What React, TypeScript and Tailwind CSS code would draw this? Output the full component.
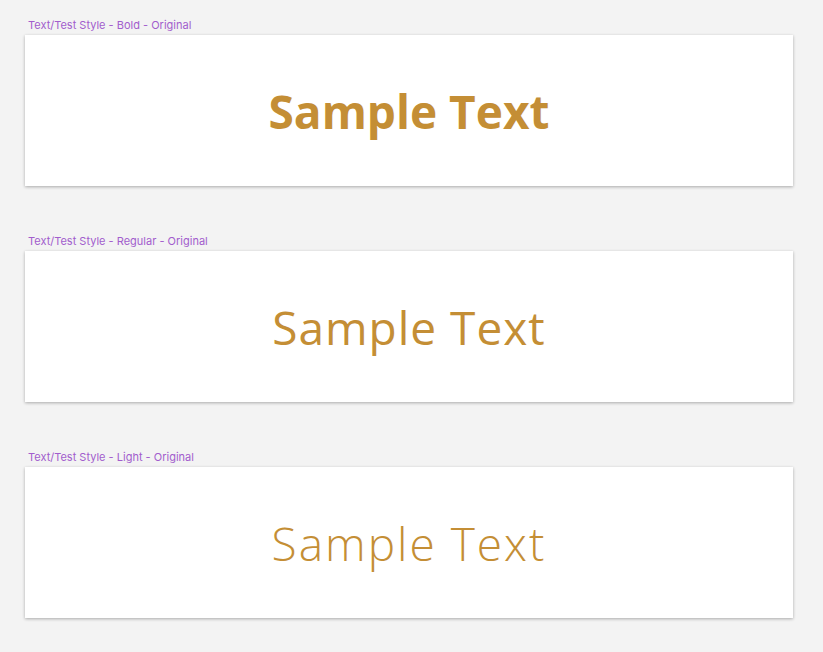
const styles = [
  { label: "Text/Test Style - Bold - Original", weight: "font-bold tracking-[0px]" },
  { label: "Text/Test Style - Regular - Original", weight: "font-normal tracking-[1px]" },
  { label: "Text/Test Style - Light - Original", weight: "font-light tracking-[2px]" },
];

export default function App() {
  return (
    <div className="min-h-[652px] w-full bg-[#f3f3f3] px-[25px] pt-[17px]">
      <div className="flex w-[768px] flex-col gap-[47px]">
        {styles.map((s) => (
          <div key={s.label} className="flex flex-col">
            <div className="h-[18px] pl-[3px] text-[11px] leading-[16px] text-[#a25dcd] [font-family:Inter,sans-serif]">
              {s.label}
            </div>
            <div className="flex h-[151px] items-center justify-center bg-white shadow-[0_1px_3px_rgba(0,0,0,0.3)]">
              <span
                className={`${s.weight} text-[46px] leading-none text-[#c48e35] [font-family:'Open_Sans',sans-serif]`}
              >
                Sample Text
              </span>
            </div>
          </div>
        ))}
      </div>
    </div>
  );
}
